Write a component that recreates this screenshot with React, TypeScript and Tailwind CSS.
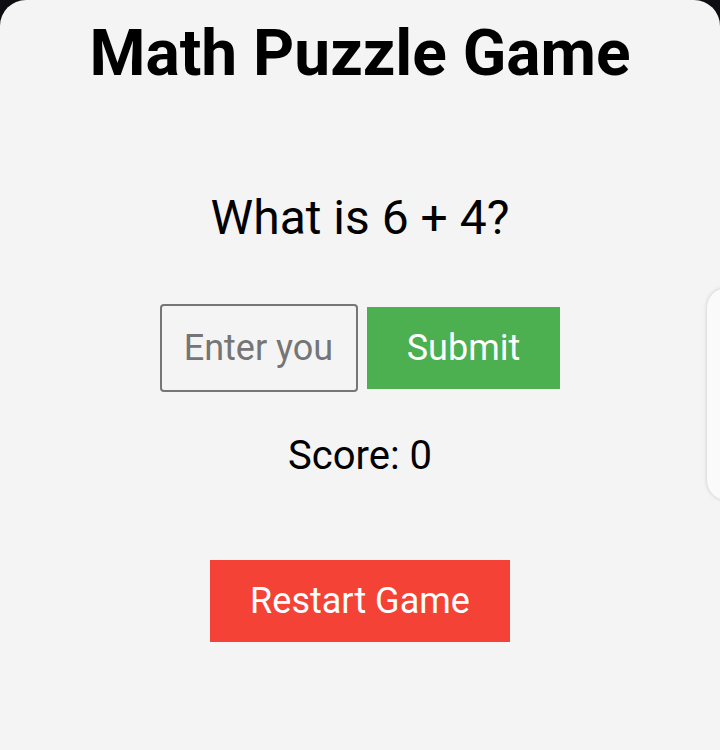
import React from "react";

export default function App() {
  return (
    <div className="w-[720px] h-[750px] bg-[#0e0e12] overflow-hidden" style={{ fontFamily: "Roboto, sans-serif" }}>
      <div className="relative w-[720px] h-[750px] bg-[#f4f4f4] rounded-t-[26px] overflow-hidden flex flex-col items-center">
        <h1 className="mt-[16px] text-[64px] leading-[75px] font-bold text-black">Math Puzzle Game</h1>
        <p className="mt-[99px] text-[48px] leading-[56px] text-black">What is 6 + 4?</p>
        <div className="mt-[58px] flex items-center gap-[9px]">
          <input
            type="text"
            placeholder="Enter your answer"
            className="w-[198px] h-[88px] border-2 border-[#767676] rounded-[4px] pl-[22px] pr-[25px] text-[36px] bg-transparent placeholder:text-[#757575] text-black outline-none"
          />
          <button className="h-[82px] px-[40px] bg-[#4caf50] text-white text-[36px] leading-[42px]">Submit</button>
        </div>
        <p className="mt-[40px] text-[40px] leading-[47px] text-black">Score: 0</p>
        <button className="mt-[81px] h-[82px] w-[300px] bg-[#f44336] text-white text-[36px] leading-[42px]">Restart Game</button>
        <div className="absolute left-[707px] top-[288px] w-[300px] h-[212px] rounded-[20px] bg-[#fafafa] shadow-[0_0_4px_rgba(0,0,0,0.18)]" />
      </div>
    </div>
  );
}
